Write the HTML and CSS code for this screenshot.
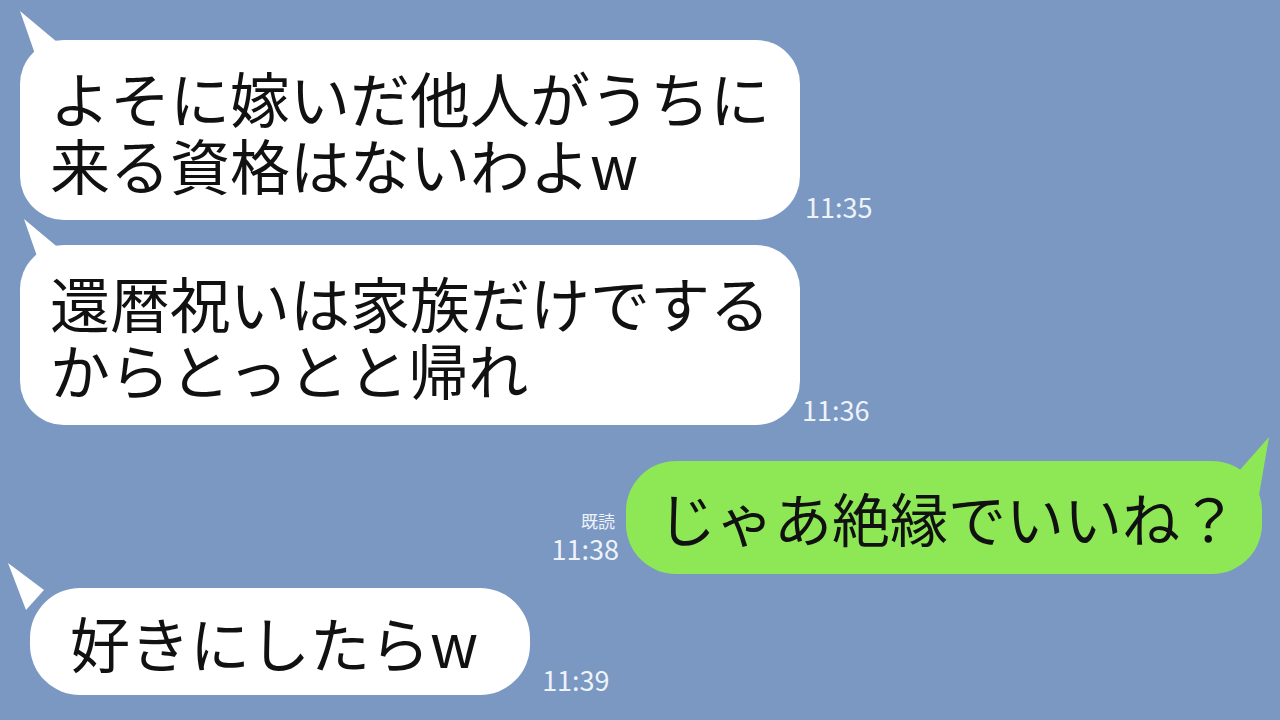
FILE: index.html
```html
<!DOCTYPE html>
<html lang="ja">
<head>
    <meta charset="UTF-8">
    <meta name="viewport" content="width=device-width, initial-scale=1.0">
    <title>トーク</title>
    <link rel="stylesheet" href="styles.css">
</head>
<body>
    <div class="chat">
        <div class="row row-first">
            <div class="bubble left tail">よそに嫁いだ他人がうちに<br>来る資格はないわよw</div>
            <div class="meta meta-1"><span class="time">11:35</span></div>
        </div>
        <div class="row row-second">
            <div class="bubble left tail">還暦祝いは家族だけでする<br>からとっとと帰れ</div>
            <div class="meta meta-2"><span class="time">11:36</span></div>
        </div>
        <div class="row row-mine">
            <div class="meta meta-mine">
                <span class="read">既読</span>
                <span class="time">11:38</span>
            </div>
            <div class="bubble right">じゃあ絶縁でいいね？</div>
        </div>
        <div class="row row-last">
            <div class="bubble left short">好きにしたらw</div>
            <div class="meta meta-4"><span class="time">11:39</span></div>
        </div>
    </div>
</body>
</html>
```

FILE: styles.css
```css
body {
    margin: 0;
    background: #7b98c2;
    font-family: "Noto Sans CJK JP", "Noto Sans", sans-serif;
    width: 1280px;
    height: 720px;
    overflow: hidden;
}
.chat {
    display: flex;
    flex-direction: column;
    padding-top: 40px;
}
.row {
    display: flex;
    align-items: flex-end;
}
.row-first {
    padding-left: 20px;
}
.row-second {
    padding-left: 20px;
    margin-top: 25px;
}
.row-mine {
    justify-content: flex-end;
    padding-right: 18px;
    margin-top: 36px;
}
.row-last {
    padding-left: 30px;
    margin-top: 14px;
}
.bubble {
    position: relative;
    font-size: 60px;
    line-height: 67px;
    color: #111;
    background: #fff;
    border-radius: 44px;
    padding: 23px 30px;
    white-space: nowrap;
}
.bubble.right {
    background: #8ee856;
    font-size: 58px;
    padding: 23px 24px 23px 32px;
    border-radius: 50px;
}
.bubble.short {
    padding: 20px 52px 20px 40px;
    border-radius: 50px;
}
/* しっぽ */
.bubble.left::before {
    content: "";
    position: absolute;
    left: 0;
    top: -29px;
    width: 40px;
    height: 45px;
    background: inherit;
    clip-path: polygon(0 0, 37px 31px, 15px 43px);
}
.row-second .bubble::before {
    left: 4px;
    top: -26px;
}
.bubble.short::before {
    left: -22px;
    top: -25px;
    clip-path: polygon(0 0, 36px 27px, 18px 47px);
    width: 40px;
    height: 50px;
}
.bubble.right::after {
    content: "";
    position: absolute;
    right: -7px;
    top: -24px;
    width: 38px;
    height: 58px;
    background: #8ee856;
    clip-path: polygon(100% 0, 8px 34px, 28px 58px);
}
.meta {
    display: flex;
    flex-direction: column;
    color: #eef3fa;
    font-size: 27px;
    line-height: 27px;
}
.meta-1 {
    margin-left: 5px;
}
.meta-2 {
    margin-left: 2px;
    padding-bottom: 2px;
}
.meta-mine {
    align-items: flex-end;
    margin-right: 7px;
    padding-bottom: 12px;
}
.meta-4 {
    margin-left: 12px;
    padding-bottom: 2px;
}
.read {
    font-size: 17px;
    line-height: 20px;
    margin-right: 4px;
    margin-bottom: 4px;
}
```
